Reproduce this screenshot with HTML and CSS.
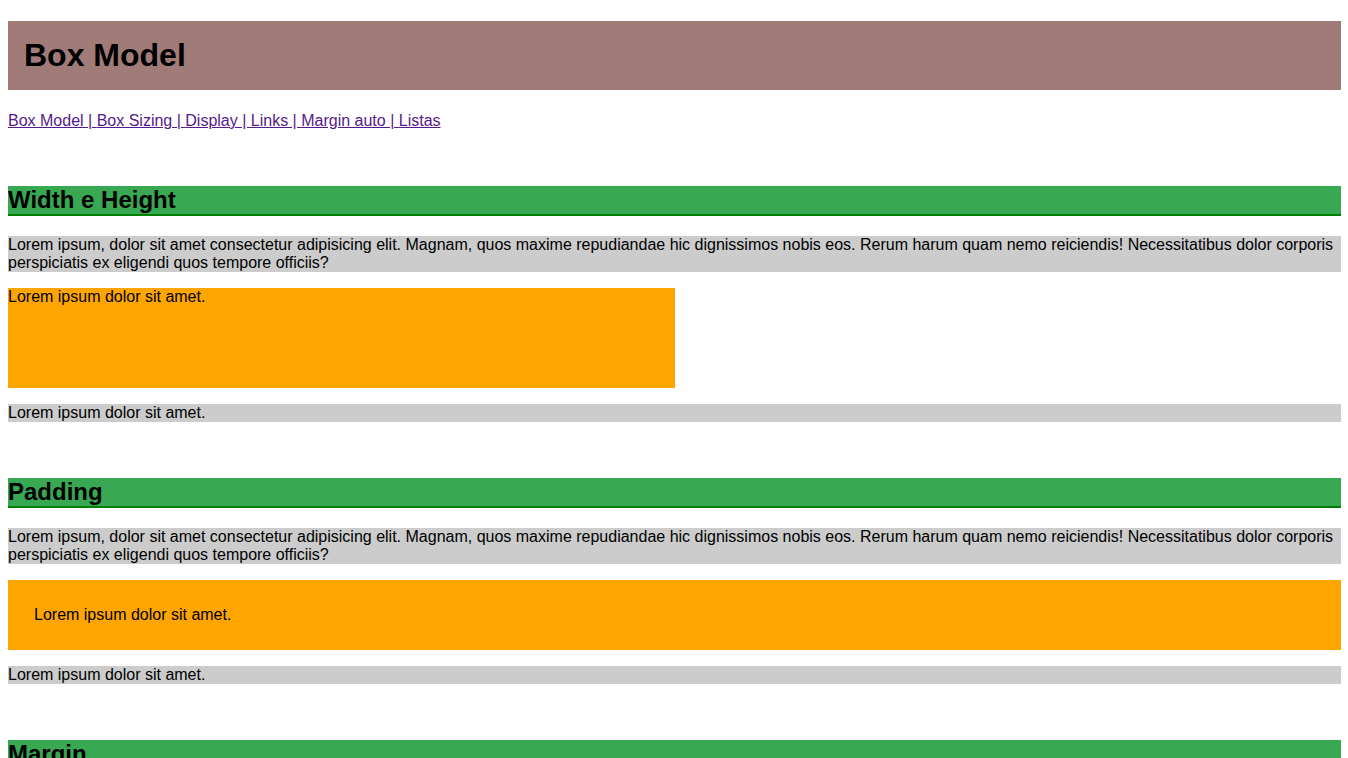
FILE: index.html
```html
<!DOCTYPE html>
<html lang="pt-BR">
<head>
  <meta charset="UTF-8">
  <meta name="viewport" content="width=device-width, initial-scale=1.0">
  <title>Box Model</title>
  <link rel="stylesheet" href="styles.css">
</head>
<body>
  <h1 class="titulo">Box Model</h1>

  <p class="menu">
    <a href="#">Box Model | </a><a href="#">Box Sizing | </a><a href="#">Display | </a><a href="#">Links | </a><a href="#">Margin auto | </a><a href="#">Listas</a>
  </p>

  <section>
    <h2>Width e Height</h2>
    <p class="cinza">Lorem ipsum, dolor sit amet consectetur adipisicing elit. Magnam, quos maxime repudiandae hic dignissimos nobis eos. Rerum harum quam nemo reiciendis! Necessitatibus dolor corporis perspiciatis ex eligendi quos tempore officiis?</p>
    <p class="caixa-wh">Lorem ipsum dolor sit amet.</p>
    <p class="cinza">Lorem ipsum dolor sit amet.</p>
  </section>

  <section>
    <h2>Padding</h2>
    <p class="cinza">Lorem ipsum, dolor sit amet consectetur adipisicing elit. Magnam, quos maxime repudiandae hic dignissimos nobis eos. Rerum harum quam nemo reiciendis! Necessitatibus dolor corporis perspiciatis ex eligendi quos tempore officiis?</p>
    <p class="caixa-padding">Lorem ipsum dolor sit amet.</p>
    <p class="cinza">Lorem ipsum dolor sit amet.</p>
  </section>

  <section>
    <h2>Margin</h2>
    <p class="cinza">Lorem ipsum, dolor sit amet consectetur adipisicing elit. Magnam, quos maxime repudiandae hic dignissimos nobis eos. Rerum harum quam nemo reiciendis! Necessitatibus dolor corporis perspiciatis ex eligendi quos tempore officiis?</p>
    <p class="caixa-margin">Lorem ipsum dolor sit amet.</p>
    <p class="cinza">Lorem ipsum dolor sit amet.</p>
  </section>
</body>
</html>
```

FILE: styles.css
```css
body {
  font-family: "Liberation Sans", Arial, sans-serif;
  font-size: 16px;
  color: #000;
  margin: 8px 7px 8px 8px;
}
.titulo {
  background-color: #a07b78;
  padding: 16px;
  font-size: 32px;
  margin: 13px 0 22px;
}
.menu {
  margin: 0;
}
.menu a {
  color: #551a8b;
}
section {
  margin-top: 56px;
}
h2 {
  background-color: #38a852;
  border-bottom: 2px solid #008000;
  font-size: 24px;
  margin: 0 0 20px;
}
p {
  margin: 16px 0;
}
.cinza {
  background-color: #ccc;
}
.caixa-wh {
  background-color: orange;
  width: 50%;
  height: 100px;
}
.caixa-padding {
  background-color: orange;
  padding: 26px;
}
.caixa-margin {
  background-color: orange;
  margin: 30px;
}
```
